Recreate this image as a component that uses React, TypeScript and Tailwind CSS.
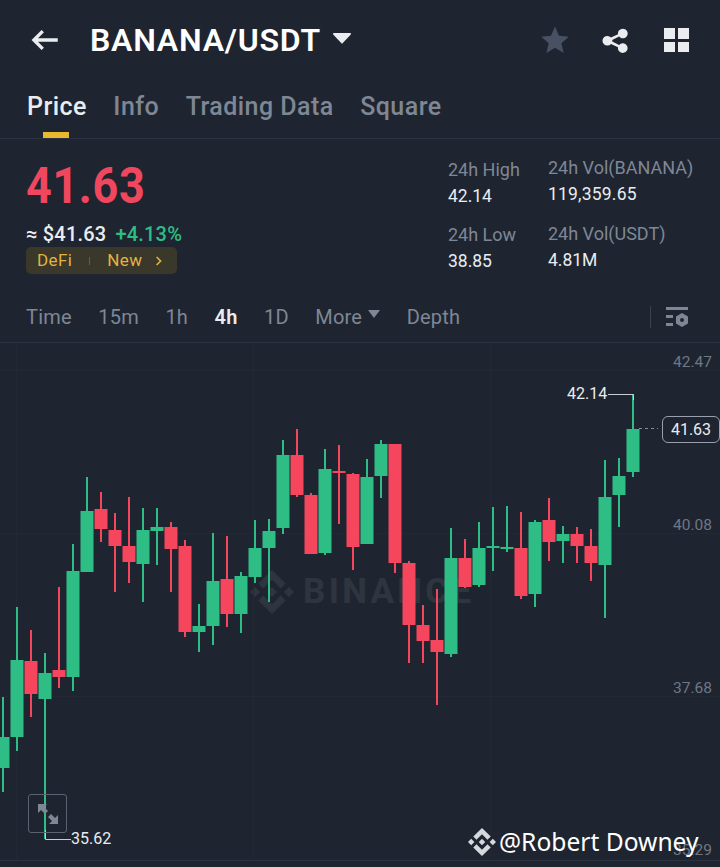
const G = "#2ebd85";
const R = "#f6465d";
// [centerX, bodyTop, bodyBottom, wickTop, wickBottom, up]
const c: [number, number, number, number, number, number][] = [
  [3,737,768,697,792,1],[17,660,737,607,751,1],[31,661,694,630,717,0],[45,673,699,653,839,1],[59,670,677,587,688,0],[73,571,677,544,691,1],
  [87,511,572,477,572,1],[101,509,529,492,542,0],[115,530,546,513,592,0],[129,546,562,497,583,0],[143,530,564,508,602,1],[157,527,531,508,565,1],
  [171,527,549,522,592,0],[185,546,632,540,637,0],[199,626,632,604,652,1],[213,581,626,533,645,1],[227,579,614,536,627,0],[241,576,614,572,633,1],
  [255,548,577,520,583,1],[269,531,548,519,602,1],[283,455,528,440,534,1],[297,455,495,429,497,0],[311,495,554,493,554,0],[325,469,553,449,555,1],
  [339,471,473,445,524,0],[353,474,547,473,570,0],[367,477,544,459,544,1],[381,444,476,440,498,1],[395,444,563,444,573,0],[409,563,625,561,663,0],
  [423,625,641,605,663,0],[437,640,652,589,705,0],[451,558,654,528,657,1],[465,558,587,539,588,0],[479,548,585,522,587,1],[493,546,548,507,571,1],
  [507,547,549,506,552,1],[521,548,596,512,599,0],[535,522,594,520,607,1],[549,520,542,498,561,0],[563,534,541,526,563,1],[577,534,546,527,563,0],
  [591,546,563,529,581,0],[605,497,565,460,618,1],[619,476,495,458,527,1],[633,429,472,394,477,1],
];

function Logo({ className, fill }: { className: string; fill: string }) {
  return (
    <svg viewBox="0 0 126 126" className={className} fill={fill}>
      <path d="M38.2 53 63 28.2 87.8 53l14.4-14.4L63 0 23.8 38.6zM0 63l14.4-14.4L28.8 63 14.4 77.4zM38.2 73 63 97.8 87.8 73l14.4 14.4L63 126 23.8 87.4zM97.2 63l14.4-14.4L126 63l-14.4 14.4zM77.6 63 63 48.4 52.2 59.2 50.9 60.4 48.4 63 63 77.6z" />
    </svg>
  );
}

export default function App() {
  return (
    <div className="w-[720px] h-[867px] overflow-hidden bg-[#1e2530] text-[#eaecef] font-['Roboto','Noto_Sans',sans-serif] flex flex-col">
      <header className="h-[80px] shrink-0 flex items-center pl-[30px] pr-[31px]">
        <svg viewBox="0 0 30 24" className="w-[29px] h-[24px]" fill="none" stroke="#eaecef" strokeWidth="3.4" strokeLinecap="square">
          <path d="M27 12H5M12 4l-8 8 8 8" />
        </svg>
        <h1 className="ml-[31px] text-[32px] leading-none font-semibold text-white tracking-[0.75px]">BANANA/USDT</h1>
        <svg viewBox="0 0 18 12" className="ml-[12px] mb-[5px] w-[18px] h-[12px]" fill="#eaecef"><path d="M1 1h16a1 1 0 0 1 .8 1.5L9.8 11a1 1 0 0 1-1.6 0L.2 2.5A1 1 0 0 1 1 1z" /></svg>
        <svg viewBox="0 0 24 24" className="ml-auto w-[30px] h-[30px]" fill="#475163"><path d="M12 1.2l3.2 7.4 7.8.7-5.9 5.2 1.8 7.9L12 18.2l-6.900 4.200 1.800-7.900L1 9.300l7.800-.7z" /></svg>
        <svg viewBox="0 0 24 24" className="ml-[32px] w-[27px] h-[27px]" fill="#eaecef"><path d="M18.500 1.500a4.300 4.300 0 1 1-3.300 7l-6.100 3a4.300 4.300 0 0 1 0 1.400l6.100 3a4.300 4.300 0 1 1-1 2.100l-6.200-3a4.300 4.300 0 1 1 0-5.600l6.200-3a4.300 4.300 0 0 1 4.300-4.900z" /></svg>
        <div className="ml-[35px] w-[25px] h-[24px] grid grid-cols-2 gap-[3px]">
          <span className="bg-[#eaecef]" /><span className="bg-[#eaecef]" /><span className="bg-[#eaecef]" /><span className="bg-[#eaecef]" />
        </div>
      </header>

      <nav className="h-[59px] shrink-0 border-b border-[#2b3240] flex pl-[27px] gap-[26.5px] text-[25px] leading-[54px] font-medium text-[#7f8795] tracking-[0.45px]">
        <div className="relative h-[58px] text-[#eaecef]">
          Price
          <span className="absolute left-[16px] bottom-0 w-[26px] h-[6px] bg-[#e8b92e]" />
        </div>
        <span>Info</span>
        <span>Trading Data</span>
        <span>Square</span>
      </nav>

      <section className="h-[144px] shrink-0 relative flex justify-between pl-[26px]">
        <div className="pt-[15px]">
          <div className="text-[45px] leading-[58px] font-bold text-[#f0475f] tracking-[0.6px] origin-top scale-y-[1.12]">41.63</div>
          <div className="mt-[10px] flex items-baseline text-[20px] leading-[24px] font-medium tracking-[0.2px]">
            <span>≈ $41.63</span>
            <span className="ml-[9px] text-[#2ebd85]">+4.13%</span>
          </div>
          <div className="mt-[1px] w-[151px] h-[27px] rounded-[5px] bg-[#3a372b] flex items-center pl-[11px] text-[17px] tracking-[0.4px] text-[#e3b341]">
            <span>DeFi</span>
            <span className="mx-[17px] w-px h-[8px] bg-[#6b6136]" />
            <span>New</span>
            <svg viewBox="0 0 10 12" className="ml-[13px] w-[8px] h-[10px]" fill="none" stroke="#e3b341" strokeWidth="2"><path d="M2 1l5 5-5 5" /></svg>
          </div>
        </div>
        <div className="flex w-[272px] text-[18px] leading-[26px] pt-[18px]">
          <div className="w-[100px] flex flex-col">
            <span className="text-[#7f8795]">24h High</span>
            <span className="text-[#eaecef] text-[17.5px]">42.14</span>
            <span className="mt-[13px] text-[#7f8795]">24h Low</span>
            <span className="text-[#eaecef] text-[17.5px]">38.85</span>
          </div>
          <div className="flex flex-col -mt-[2px]">
            <span className="text-[#7f8795]">24h Vol(BANANA)</span>
            <span className="text-[#eaecef] text-[17.5px] tracking-[0.2px]">119,359.65</span>
            <span className="mt-[14px] text-[#7f8795]">24h Vol(USDT)</span>
            <span className="text-[#eaecef] text-[17.5px]">4.81M</span>
          </div>
        </div>
      </section>

      <div className="h-[60px] shrink-0 border-b border-[#2b3240] flex items-center pl-[26px] pr-[31px] gap-[26.5px] text-[20px] tracking-[0.2px] text-[#7f8795] pt-[8px]">
        <span>Time</span>
        <span>15m</span>
        <span>1h</span>
        <span className="font-semibold text-[#eaecef]">4h</span>
        <span>1D</span>
        <span className="flex items-center gap-[6px]">
          More
          <svg viewBox="0 0 12 8" className="mb-[5px] w-[12px] h-[8px]" fill="#7f8795"><path d="M0 0h12L6 8z" /></svg>
        </span>
        <span>Depth</span>
        <span className="ml-auto w-px h-[22px] bg-[#3a4250]" />
        <svg viewBox="0 0 24 22" className="-ml-[12px] w-[24px] h-[22px]" fill="#7f8795">
          <rect x="1" y="1" width="22" height="3" />
          <rect x="1" y="9" width="7" height="3" />
          <rect x="1" y="17" width="7" height="3" />
          <path fillRule="evenodd" d="M17 7l6 3.500v7L17 21l-6-3.500v-7zm0 5a2 2 0 1 0 0 4 2 2 0 0 0 0-4z" />
        </svg>
      </div>

      <div className="relative flex-1">
        <div className="absolute left-[250px] top-[223px] flex items-center gap-[9px] opacity-[0.08]">
          <Logo className="w-[44px] h-[44px]" fill="#eaecef" />
          <span className="text-[35px] font-bold tracking-[3.3px] text-[#eaecef]">BINANCE</span>
        </div>

        <svg viewBox="0 343 720 524" className="relative block w-full h-full">
          <g stroke="#222935" strokeWidth="1">
            <path d="M0 370.500H720M0 533.500H720M0 696.500H720M16.500 343V860M253.500 343V860M490.500 343V860" />
            <path d="M0 860.500H720" stroke="#2b3240" />
          </g>
          {c.map(([x, t, b, wt, wb, up]) => (
            <g key={x} fill={up ? G : R}>
              <rect x={x - 1} y={wt} width="2" height={wb - wt} />
              <rect x={x - 6.500} y={t} width="13" height={b - t} />
            </g>
          ))}
          <path d="M608 394.500H633.500V400" fill="none" stroke="#c9ced6" strokeWidth="1" />
          <path d="M45.500 830V839.500H71" fill="none" stroke="#c9ced6" strokeWidth="1" />
          <path d="M639 428.500H658" stroke="#848e9c" strokeWidth="1" strokeDasharray="3 3" />
        </svg>

        <span className="absolute right-[8px] top-[9px] text-[15.5px] leading-[20px] text-[#6f7785]">42.47</span>
        <span className="absolute right-[8px] top-[172px] text-[15.5px] leading-[20px] text-[#6f7785]">40.08</span>
        <span className="absolute right-[8px] top-[335px] text-[15.5px] leading-[20px] text-[#6f7785]">37.68</span>
        <span className="absolute right-[8px] top-[497px] text-[15.5px] leading-[20px] text-[#6f7785]">35.29</span>

        <span className="absolute left-[567px] top-[41px] text-[16px] leading-[20px] text-[#eaecef]">42.14</span>
        <span className="absolute left-[71px] top-[486px] text-[16px] leading-[20px] text-[#eaecef]">35.62</span>
        <span className="absolute left-[662px] top-[73px] w-[58px] h-[27px] rounded-[6px] border border-[#9aa1ad] bg-[#1e2530] text-center text-[16px] leading-[25px] text-[#eaecef]">41.63</span>

        <div className="absolute left-[28px] top-[451px] w-[39px] h-[39px] rounded-[3px] border border-[#5b626f] flex items-center justify-center">
          <svg viewBox="0 0 24 24" className="w-[24px] h-[24px]" fill="#7f8795">
            <path d="M2 2h9L8 5l4 4-3 3-4-4-3 3zM22 22h-9l3-3-4-4 3-3 4 4 3-3z" />
          </svg>
        </div>

        <div className="absolute left-[468px] top-[484px] flex items-center gap-[3px]">
          <Logo className="w-[28px] h-[28px]" fill="#d5d8dc" />
          <span className="text-[24.6px] leading-[30px] text-white font-['Noto_Sans',sans-serif]">@Robert Downey</span>
        </div>
      </div>
    </div>
  );
}
